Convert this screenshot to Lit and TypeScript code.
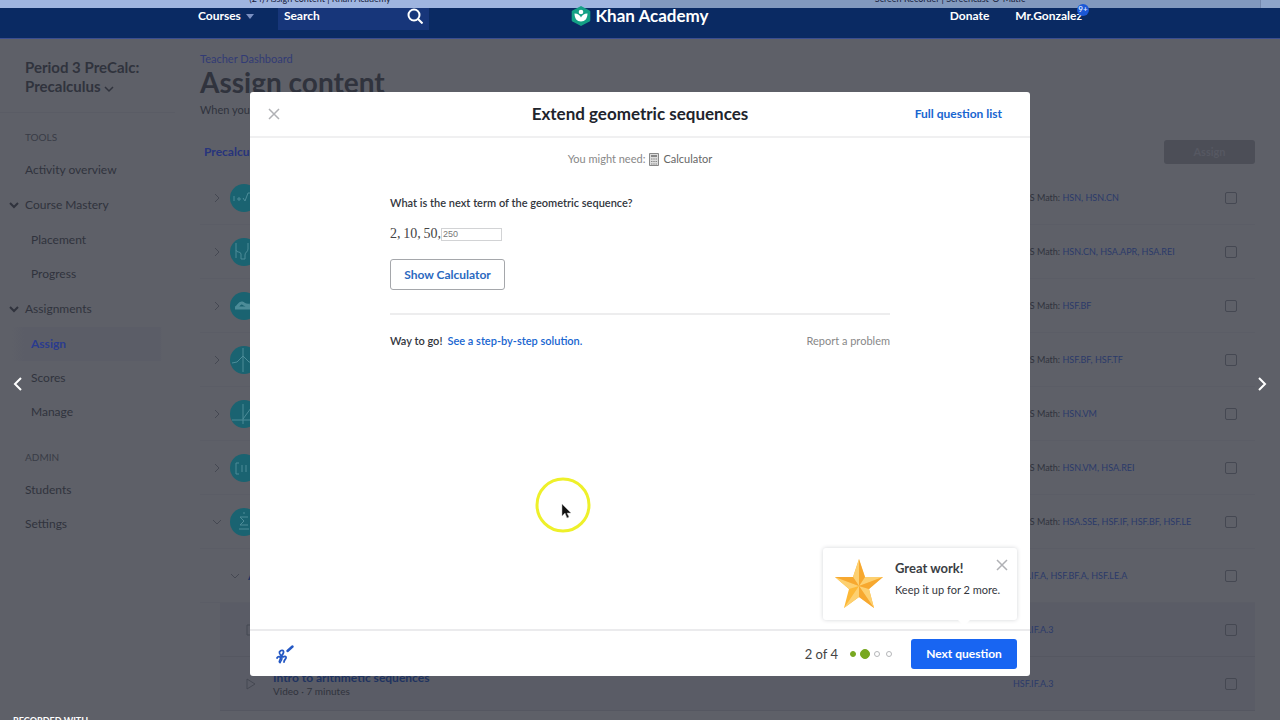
import { LitElement, html, css, svg } from "lit";
import { customElement } from "lit/decorators.js";
import { classMap } from "lit/directives/class-map.js";

interface NavItem { label: string; kind: "item" | "group" | "child"; active?: boolean }
interface Unit { glyph: unknown; open?: boolean; standards: string }

const tools: NavItem[] = [
  { label: "Activity overview", kind: "item" },
  { label: "Course Mastery", kind: "group" },
  { label: "Placement", kind: "child" },
  { label: "Progress", kind: "child" },
  { label: "Assignments", kind: "group" },
  { label: "Assign", kind: "child", active: true },
  { label: "Scores", kind: "child" },
  { label: "Manage", kind: "child" },
];
const admin: NavItem[] = [
  { label: "Students", kind: "item" },
  { label: "Settings", kind: "item" },
];

const units: Unit[] = [
  { standards: "HSN, HSN.CN", glyph: svg`<path d="M4 12v5M7 15h4M9 13v4M13 14l2 3 3-8h5"/>` },
  { standards: "HSN.CN, HSA.APR, HSA.REI", glyph: svg`<path d="M6 5v7c0 3 5 1 5 4v5h4v-4c0-3 3-3 3-6V5M6 12v8"/>` },
  { standards: "HSF.BF", glyph: svg`<path d="M5 16c3 0 4-6 7-5s3 3 8 2M5 16h16" stroke-width="3"/>` },
  { standards: "HSF.BF, HSF.TF", glyph: svg`<path d="M2 17l5-1 6-6 6 6 6 1M13 2v24"/>` },
  { standards: "HSN.VM", glyph: svg`<path d="M13 4v20M2 20h24M13 19l8-11"/>` },
  { standards: "HSN.VM, HSA.REI", glyph: svg`<path d="M9 9H6v11h3M12 11v7M16 11v7"/>` },
  { standards: "HSA.SSE, HSF.IF, HSF.BF, HSF.LE", open: true, glyph: svg`<path d="M18 9h-8l4 4-4 4h8M13 5h2M9 21h10"/>` },
];

const chevron = (cls: string) =>
  html`<svg class=${cls} viewBox="0 0 10 10" width="10" height="10"><path d="M1 3l4 4 4-4" /></svg>`;
const cross = html`<svg class="cross" viewBox="0 0 12 12" width="12" height="12"><path d="M1 1l10 10M11 1L1 11" /></svg>`;

@customElement("app-root")
export class AppRoot extends LitElement {
  static styles = css`
    :host {
      display: flex;
      flex-direction: column;
      position: relative;
      height: 100vh;
      overflow: hidden;
      background: #5e6068;
      color: #30333d;
      font: 12px/16px Lato, "Open Sans", sans-serif;
    }
    * { box-sizing: border-box; }
    a { color: inherit; text-decoration: none; }
    button { font: inherit; color: inherit; background: none; border: 0; padding: 0; }
    svg { display: block; fill: none; stroke: currentColor; flex: none; }
    svg.solid { stroke: none; }
    h1, h2, p, ul { margin: 0; padding: 0; list-style: none; }

    .tabs { display: flex; flex: none; height: 8px; overflow: hidden; font-size: 9px; line-height: 12px; color: #17203a; }
    .tab { flex: 1; display: flex; justify-content: center; align-items: flex-end; background: #8299be; }
    .tab.current { flex: 0 0 50%; background: #9fb5e0; }
    .tab span { margin-bottom: 3px; }
    .plus { width: 20px; border-left: 1px solid #7488ad; background: #8ea5ca; }

    .topnav {
      flex: none; display: grid; grid-template-columns: 1fr auto 1fr; align-items: start;
      height: 31px; background: #0a2a63; border-bottom: 1px solid #3c4e90;
      color: #fff; font-weight: 700; padding: 0 198px;
    }
    .left { display: flex; gap: 24px; }
    .courses { display: flex; align-items: center; gap: 5px; height: 16px; }
    .tri { fill: #7b90c2; stroke: none; }
    .search { display: flex; align-items: start; width: 151px; height: 22px; padding: 0 6px; background: #17367a; }
    .search input { flex: 1; min-width: 0; height: 16px; padding: 0; border: 0; outline: 0; background: none; color: #fff; font: inherit; }
    .search input::placeholder { color: #fff; opacity: 1; }
    .brand { display: flex; align-items: center; gap: 4px; height: 16px; font-size: 17px; }
    .right { display: flex; justify-content: flex-end; gap: 26px; }
    .user { position: relative; }
    .badge {
      position: absolute; right: -7px; top: -4px; width: 12px; height: 12px; border-radius: 6px;
      background: #1b57d6; color: #dce6ff; font-size: 8px; line-height: 11px; text-align: center;
    }

    .page { flex: 1; display: grid; grid-template-columns: 175px 1fr; min-height: 0; }
    .side { padding-top: 19px; }
    .class { display: block; padding: 0 0 16px 25px; font-size: 15px; line-height: 19px; font-weight: 700; border-bottom: 1px solid #5a5c65; text-align: left; width: 100%; }
    .class svg { display: inline-block; vertical-align: -2px; stroke-width: 1.5; }
    .heading { padding-left: 25px; margin: 16px 0 8px; font-size: 10px; line-height: 16px; color: #393c46; }
    .heading.admin { margin: 20px 0 8px; }
    .item { display: flex; align-items: center; height: 34px; padding-left: 25px; }
    .group { height: 36px; padding-left: 9px; gap: 6px; }
    .child { padding-left: 31px; }
    .active { color: #2a3b8e; font-weight: 700; background: linear-gradient(90deg, #5e6068 12px, #5b5d67 24px, #5b5d67 160px, #5e6068 162px); }
    .item svg { stroke-width: 2; }

    .main { padding: 12px 25px 0; min-width: 0; }
    .crumb { display: block; font-size: 11px; line-height: 16px; color: #323b75; }
    h1 { font-size: 28px; line-height: 30px; }
    .hint { font-size: 11px; line-height: 16px; margin-top: 5px; }
    .bar { display: flex; justify-content: space-between; align-items: center; height: 24px; margin: 22px 0 7px; }
    .bar a { padding-left: 4px; color: #27347c; font-weight: 700; }
    .assign { width: 91px; height: 24px; border-radius: 3px; background: #4c4e57; color: #565862; font-size: 11px; font-weight: 700; }
    .row {
      display: grid; grid-template-columns: 12px 26px 1fr 206px 12px; column-gap: 6px; align-items: center;
      height: 54px; padding: 0 18px 0 12px; border-bottom: 1px solid #5b5d66; font-size: 9px;
    }
    .row svg { color: #454852; }
    .row svg.side-chev { transform: rotate(-90deg); }
    .row svg.disc { width: 28px; height: 28px; border-radius: 14px; background: #1a6371; color: #4c8c98; }
    .std { white-space: nowrap; }
    .std span { color: #2b3a6a; }
    .row input { appearance: none; width: 12px; height: 12px; margin: 0; border: 1px solid #454852; border-radius: 2px; }
    .row.sub { grid-template-columns: 12px 1fr 206px 12px; padding-left: 30px; }
    .row.leaf { margin-left: 20px; padding-left: 24px; grid-template-columns: 16px 1fr 206px 12px; background: #5a5c66; border-color: #555761; }
    .name { font-size: 12px; font-weight: 700; line-height: 15px; color: #1f3360; display: block; }
    .leaf .text { padding-left: 7px; }
    .meta { display: block; line-height: 13px; font-size: 10px; }

    .overlay {
      position: absolute; inset: 0; padding: 92px 13px 44px; display: flex;
      justify-content: space-between; align-items: center; color: #fff;
    }
    .dialog {
      align-self: stretch; width: 780px; max-width: calc(100% - 40px); display: flex; flex-direction: column;
      background: #fff; border-radius: 3px; color: #33363d; position: relative;
    }
    .dialog header {
      display: grid; grid-template-columns: 1fr auto 1fr; align-items: center; height: 46px; padding: 0 18px;
      border-bottom: 2px solid #f0f0f1;
    }
    h2 { font-size: 17px; line-height: 22px; font-weight: 700; color: #21242c; }
    .list { justify-self: end; margin-right: 10px; color: #1865d0; font-weight: 700; }
    .cross { color: #b0b1b5; stroke-width: 1.5; }
    .body { flex: 1; width: 500px; max-width: 100%; margin: 0 auto; font-size: 11px; padding-top: 13px; }
    .need { display: flex; justify-content: center; align-items: center; gap: 4px; color: #888; }
    .need b { font-weight: 400; color: #666; }
    .body .q { margin-top: 28px; font-weight: 600; }
    .seq { display: flex; align-items: center; margin-top: 15px; font-family: "Liberation Serif", serif; font-size: 14px; color: #444; }
    .seq input { width: 61px; height: 13px; padding: 0 1px; border: 1px solid #d2d3d5; font: 9px/11px "Liberation Sans", sans-serif; color: #777; }
    .show { display: block; width: 115px; height: 31px; margin-top: 17px; border: 1px solid #a5a7ab; border-radius: 3px; color: #2b69bf; font-size: 12px; font-weight: 700; }
    .result { display: flex; align-items: center; gap: 5px; margin-top: 23px; padding-top: 18px; border-top: 2px solid #ededee; font-weight: 600; }
    .result a { color: #1865d0; }
    .result .report { margin-left: auto; font-weight: 400; color: #888; }
    .dialog footer {
      display: flex; align-items: center; height: 47px; padding: 0 13px 0 25px; border-top: 2px solid #ebebed; font-size: 13px;
    }
    .dots { display: flex; align-items: center; gap: 6px; margin: 0 19px 0 12px; }
    .dot { width: 6px; height: 6px; border-radius: 3px; border: 1px solid #b5b6b9; }
    .dot.done { background: #78a821; border-color: #78a821; }
    .dot.now { width: 10px; height: 10px; border-radius: 5px; margin: 0 -2px; }
    .count { margin-left: auto; color: #444; }
    .next { width: 106px; height: 30px; border-radius: 3px; background: #1865f2; color: #fff; font-size: 12px; font-weight: 700; }
    .toast {
      position: absolute; right: 13px; bottom: 56px; width: 194px; height: 72px; display: flex; align-items: flex-start; gap: 12px;
      padding: 11px 10px 0 12px; border-radius: 3px; background: #fff; box-shadow: 0 0 4px #d4d5d8; font-size: 11px;
    }
    .toast::after {
      content: ""; position: absolute; right: 45px; bottom: -6px; border: 8px solid transparent; border-top-color: #fff; border-bottom: 0;
    }
    .toast strong { display: block; font-size: 13px; line-height: 18px; margin-bottom: 5px; color: #3b3e44; }
    .toast p { white-space: nowrap; }
    .toast button { position: absolute; right: 9px; top: 11px; }
    .nav-arrow svg { stroke-width: 2; }
    .cursor { position: absolute; left: 535px; top: 477px; }
    .mark { position: absolute; left: 13px; top: 715px; color: #fff; font-size: 9px; line-height: 12px; font-weight: 700; white-space: nowrap; }
  `;

  private nav(items: NavItem[]) {
    return items.map((i) => html`<li>
      <a href="#" class=${classMap({ item: true, group: i.kind === "group", child: i.kind === "child", active: !!i.active })}>
        ${i.kind === "group" ? chevron("") : ""}<span>${i.label}</span></a></li>`);
  }

  render() {
    return html`
      <div class="tabs">
        <div class="tab current"><span>(24) Assign content | Khan Academy</span></div>
        <div class="tab"><span>Screen Recorder | Screencast-O-Matic</span></div>
        <div class="plus"></div>
      </div>
      <nav class="topnav">
        <div class="left">
          <a class="courses" href="#">Courses
            <svg class="tri" viewBox="0 0 8 5" width="8" height="5"><path d="M0 0h8L4 5z" /></svg></a>
          <label class="search">
            <input type="text" placeholder="Search" aria-label="Search" />
            <svg viewBox="0 0 16 16" width="16" height="16" stroke-width="2"><circle cx="7" cy="7" r="5.500" /><path d="M11 11l4.500 4.500" /></svg>
          </label>
        </div>
        <a class="brand" href="#">
          <svg class="solid" viewBox="0 0 20 20" width="20" height="20">
            <path fill="#14a085" d="M10 0l8.500 4.500q.8.500.8 1.300v8.400q0 .8-.8 1.300L10 20l-8.500-4.500q-.8-.5-.8-1.300V5.800q0-.8.8-1.300z" />
            <circle cx="10" cy="6" r="2.300" fill="#fff" />
            <path fill="#fff" d="M3.500 7.500c3.500 0 5.700 1.800 6.500 4 .8-2.200 3-4 6.500-4 0 5-2.500 8-6.500 8s-6.500-3-6.500-8z" />
          </svg>Khan Academy</a>
        <div class="right">
          <a href="#">Donate</a>
          <a class="user" href="#">Mr.Gonzalez<span class="badge">9+</span></a>
        </div>
      </nav>

      <div class="page">
        <aside class="side">
          <button class="class">Period 3 PreCalc:<br />Precalculus ${chevron("")}</button>
          <p class="heading">TOOLS</p>
          <ul>${this.nav(tools)}</ul>
          <p class="heading admin">ADMIN</p>
          <ul>${this.nav(admin)}</ul>
        </aside>
        <main class="main">
          <a class="crumb" href="#">Teacher Dashboard</a>
          <h1>Assign content</h1>
          <p class="hint">When you</p>
          <div class="bar"><a href="#">Precalculus</a><button class="assign">Assign</button></div>
          ${units.map((u) => html`<div class="row">
            ${chevron(u.open ? "" : "side-chev")}
            <svg class="disc" viewBox="0 0 28 28">${u.glyph}</svg>
            <span></span>
            <span class="std">CCSS Math: <span>${u.standards}</span></span>
            <input type="checkbox" aria-label=${u.standards} />
          </div>`)}
          <div class="row sub">
            ${chevron("")}<a class="name" href="#">Arithmetic sequences</a>
            <span class="std"><span>HSF.IF.A, HSF.BF.A, HSF.LE.A</span></span>
            <input type="checkbox" aria-label="HSF.IF.A" />
          </div>
          <div class="row leaf">
            <svg viewBox="0 0 14 14" width="14" height="14"><path d="M3 2h9v10H3z" /></svg><span></span>
            <span class="std"><span>HSF.IF.A.3</span></span>
            <input type="checkbox" aria-label="HSF.IF.A.3" />
          </div>
          <div class="row leaf">
            <svg viewBox="0 0 14 14" width="14" height="14"><path d="M3 2l8 5-8 5z" /></svg>
            <div class="text"><a class="name" href="#">Intro to arithmetic sequences</a><span class="meta">Video · 7 minutes</span></div>
            <span class="std"><span>HSF.IF.A.3</span></span>
            <input type="checkbox" aria-label="Intro to arithmetic sequences" />
          </div>
        </main>
      </div>

      <div class="overlay">
        <button class="nav-arrow" aria-label="Previous"><svg viewBox="0 0 10 14" width="10" height="14"><path d="M8 1L2 7l6 6" /></svg></button>
        <section class="dialog" role="dialog" aria-label="Extend geometric sequences">
          <header>
            <button aria-label="Close">${cross}</button>
            <h2>Extend geometric sequences</h2>
            <a class="list" href="#">Full question list</a>
          </header>
          <div class="body">
            <div class="need">You might need:
              <svg viewBox="0 0 10 13" width="10" height="13"><path fill="#ddd" d="M.5.5h9v12h-9z" /><path d="M2 3h6" stroke-width="2" /><path d="M2 6h6M2 8.500h6M2 11h6" stroke-dasharray="1.500 .75" /></svg>
              <b>Calculator</b></div>
            <p class="q">What is the next term of the geometric sequence?</p>
            <label class="seq">2,&#8201;10,&#8201;50,<input type="text" .value=${"250"} /></label>
            <button class="show">Show Calculator</button>
            <div class="result"><span>Way to go!</span><a href="#">See a step-by-step solution.</a><a class="report" href="#">Report a problem</a></div>
          </div>
          <footer>
            <button aria-label="Draw"><svg viewBox="0 0 20 20" width="20" height="20" color="#2458c4" stroke-width="2" stroke-linecap="round">
              <path d="M2 14c1-2 4-1.500 3.500.5S3.500 18 5 18.500M4.500 8C6 5.500 9 6 8.500 8.500S5.500 11.500 7 12.500s3-1 4 .5-2 2.500-2 5" stroke-width="1.800" />
              <path d="M4.500 8c-1 2 2.500 3.500 2.500 6s-1.500 3.500-2 4.500" stroke-width="1.500" />
              <path d="M12.500 7L17.500 2.500" stroke-width="2.500" /></svg></button>
            <span class="count">2 of 4</span>
            <span class="dots"><i class="dot done"></i><i class="dot done now"></i><i class="dot"></i><i class="dot"></i></span>
            <button class="next">Next question</button>
          </footer>
          <aside class="toast">
            <svg class="solid" viewBox="0 0 48 50" width="48" height="50">
              <path fill="#fdb836" d="M24 0l6 18h18L34 30l5 19-15-11L9 49l5-19L0 18h18z" />
              <path fill="#fdd070" d="M24 0v27L18 18zM0 18l24 9-10 3zM9 49l15-22v11zM39 49L24 27l10 3zM48 18l-24 9 6-9z" />
              <path fill="#f39c2c" d="M48 18L24 27l10 3zM39 49L24 27v11zM24 0v27l6-9zM0 18l24 9-6-9z" opacity=".6" />
            </svg>
            <div><strong>Great work!</strong><p>Keep it up for 2 more.</p></div>
            <button aria-label="Dismiss">${cross}</button>
          </aside>
        </section>
        <button class="nav-arrow" aria-label="Next"><svg viewBox="0 0 10 14" width="10" height="14"><path d="M2 1l6 6-6 6" /></svg></button>
      </div>
      <svg class="cursor" viewBox="0 0 56 56" width="56" height="56">
        <circle cx="28" cy="28" r="26" stroke="#eef02a" stroke-width="3" />
        <path d="M27 27v12l3-3 2 5 2-1-2-4h4z" fill="#111" stroke="#bbb" stroke-width=".5" />
      </svg>
      <div class="mark">RECORDED WITH</div>
    `;
  }
}
